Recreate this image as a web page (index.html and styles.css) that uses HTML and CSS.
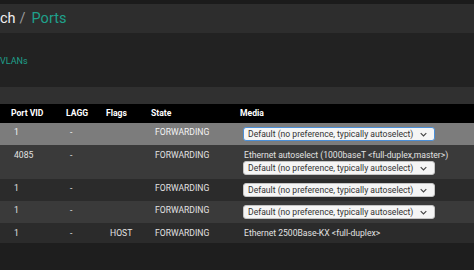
FILE: index.html
```html
<!DOCTYPE html>
<html lang="en">
<head>
  <meta charset="UTF-8" />
  <meta name="viewport" content="width=device-width, initial-scale=1.0"/>
  <title>Switch / Ports</title>
  <link rel="stylesheet" href="styles.css">
</head>
<body>
  <div class="topbar"></div>

  <div class="breadcrumb">
    <h1><span class="crumb">ch</span><span class="sep">/</span><a href="#" class="current">Ports</a></h1>
  </div>

  <div class="tabs">
    <a href="#" class="tab">VLANs</a>
  </div>

  <div class="panel-head"></div>

  <table class="ports">
    <colgroup>
      <col class="c-vid">
      <col class="c-lagg">
      <col class="c-flags">
      <col class="c-state">
      <col>
    </colgroup>
    <thead>
      <tr>
        <th>Port VID</th>
        <th>LAGG</th>
        <th>Flags</th>
        <th>State</th>
        <th>Media</th>
      </tr>
    </thead>
    <tbody>
      <tr class="selected">
        <td>1</td>
        <td>-</td>
        <td></td>
        <td>FORWARDING</td>
        <td>
          <div class="media-select focus">
            <select><option>Default (no preference, typically autoselect)</option></select>
            <svg class="chev" viewBox="0 0 10 6" width="7" height="5"><path d="M1 1l4 4 4-4" fill="none" stroke="#444" stroke-width="1.6"/></svg>
          </div>
        </td>
      </tr>
      <tr class="odd tall">
        <td>4085</td>
        <td>-</td>
        <td></td>
        <td>FORWARDING</td>
        <td>
          <div class="media-text">Ethernet autoselect (1000baseT &lt;full-duplex,master&gt;)</div>
          <div class="media-select">
            <select><option>Default (no preference, typically autoselect)</option></select>
            <svg class="chev" viewBox="0 0 10 6" width="7" height="5"><path d="M1 1l4 4 4-4" fill="none" stroke="#444" stroke-width="1.6"/></svg>
          </div>
        </td>
      </tr>
      <tr>
        <td>1</td>
        <td>-</td>
        <td></td>
        <td>FORWARDING</td>
        <td>
          <div class="media-select">
            <select><option>Default (no preference, typically autoselect)</option></select>
            <svg class="chev" viewBox="0 0 10 6" width="7" height="5"><path d="M1 1l4 4 4-4" fill="none" stroke="#444" stroke-width="1.6"/></svg>
          </div>
        </td>
      </tr>
      <tr class="odd">
        <td>1</td>
        <td>-</td>
        <td></td>
        <td>FORWARDING</td>
        <td>
          <div class="media-select">
            <select><option>Default (no preference, typically autoselect)</option></select>
            <svg class="chev" viewBox="0 0 10 6" width="7" height="5"><path d="M1 1l4 4 4-4" fill="none" stroke="#444" stroke-width="1.6"/></svg>
          </div>
        </td>
      </tr>
      <tr class="text-row">
        <td>1</td>
        <td>-</td>
        <td>HOST</td>
        <td>FORWARDING</td>
        <td><div class="media-text">Ethernet 2500Base-KX &lt;full-duplex&gt;</div></td>
      </tr>
    </tbody>
  </table>
</body>
</html>
```

FILE: styles.css
```css
* {
  box-sizing: border-box;
  font-family: Roboto, 'Liberation Sans', sans-serif;
}

body {
  margin: 0;
  padding: 0;
  background: #1e1e1e;
  color: #e2e2e2;
  overflow: hidden;
}

a {
  text-decoration: none;
}

.topbar {
  height: 4px;
  background: #1b1b1b;
}

.breadcrumb {
  height: 29px;
  background: #2d2d2d;
  display: flex;
  align-items: center;
  overflow: hidden;
}

.breadcrumb h1 {
  margin: 0;
  font-size: 14.5px;
  font-weight: 400;
  color: #f0f0f0;
  white-space: nowrap;
}

.breadcrumb .sep {
  color: #9a9a9a;
  margin: 0 6px 0 4px;
}

.breadcrumb .current {
  color: #1fa08b;
}

.tabs {
  height: 54px;
  background: #222222;
  display: flex;
  align-items: center;
  padding-top: 2px;
}

.tab {
  font-size: 9px;
  color: #1fa08b;
}

.panel-head {
  height: 17px;
  background: #303030;
}

.ports {
  width: 100%;
  border-collapse: collapse;
  table-layout: fixed;
  font-size: 8.6px;
  line-height: 11px;
}

.c-vid { width: 62px; }
.c-lagg { width: 40px; }
.c-flags { width: 45px; }
.c-state { width: 89px; }

.ports th {
  background: #000;
  color: #fff;
  font-weight: 700;
  text-align: left;
  padding: 4px 4px;
}

.ports th:first-child {
  padding-left: 11px;
}

.ports td {
  padding: 4px 8px;
  vertical-align: top;
  white-space: nowrap;
  background: #2b2b2b;
}

.ports td:first-child {
  padding-left: 14px;
}

.ports td:last-child {
  padding-left: 7px;
}

.ports tr.odd td {
  background: #3a3a3a;
}

.ports tr.selected td {
  background: #7c7c7c;
  color: #f4f4f4;
}

.ports tr.tall td {
  padding-top: 5px;
}

.ports tr.text-row td {
  padding-top: 5px;
  padding-bottom: 4px;
}

.media-text {
  padding-left: 1px;
}

.media-select {
  position: relative;
  width: 192px;
  height: 14px;
}

.media-select select {
  appearance: none;
  -webkit-appearance: none;
  width: 100%;
  height: 100%;
  margin: 0;
  padding: 0 0 0 4px;
  border: 1px solid #c4c4c4;
  border-radius: 3px;
  background: #f5f5f5;
  color: #333;
  font-size: 8.6px;
  line-height: 12px;
}

.media-select.focus select {
  border: 1.5px solid #4a8fd8;
}

.chev {
  position: absolute;
  right: 8px;
  top: 5px;
}
```
